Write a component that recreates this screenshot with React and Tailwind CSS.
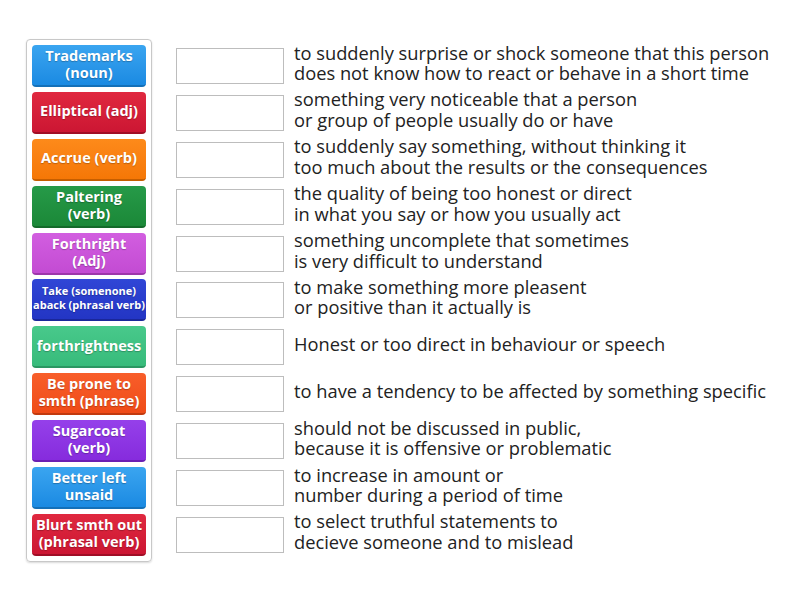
import React from "react";

const tiles = [
  { t: ["Trademarks", "(noun)"], c: "bg-gradient-to-b from-[#3aa5f0] to-[#1a8ae2] border-[#1470b8]" },
  { t: ["Elliptical (adj)"], c: "bg-gradient-to-b from-[#e0283f] to-[#cc1633] border-[#a00e26]" },
  { t: ["Accrue (verb)"], c: "bg-gradient-to-b from-[#fd8a1a] to-[#f57706] border-[#c65e00]" },
  { t: ["Paltering", "(verb)"], c: "bg-gradient-to-b from-[#269a48] to-[#1b8838] border-[#146a2a]" },
  { t: ["Forthright", "(Adj)"], c: "bg-gradient-to-b from-[#d25ee0] to-[#c34bd3] border-[#9d36ab]" },
  { t: ["Take (somenone)", "aback (phrasal verb)"], c: "bg-gradient-to-b from-[#3046d6] to-[#2335c4] border-[#1a279a]", small: true },
  { t: ["forthrightness"], c: "bg-gradient-to-b from-[#48c98b] to-[#37bb7b] border-[#2a9762]" },
  { t: ["Be prone to", "smth (phrase)"], c: "bg-gradient-to-b from-[#f85e2a] to-[#ef4b17] border-[#c23a0e]" },
  { t: ["Sugarcoat", "(verb)"], c: "bg-gradient-to-b from-[#9540ea] to-[#862bdd] border-[#6a1fb3]" },
  { t: ["Better left", "unsaid"], c: "bg-gradient-to-b from-[#3aa5f0] to-[#1a8ae2] border-[#1470b8]" },
  { t: ["Blurt smth out", "(phrasal verb)"], c: "bg-gradient-to-b from-[#e0283f] to-[#cc1633] border-[#a00e26]" },
];

const defs = [
  ["to suddenly surprise or shock someone that this person", "does not know how to react or behave in a short time"],
  ["something very noticeable that a person", "or group of people usually do or have"],
  ["to suddenly say something, without thinking it", "too much about the results or the consequences"],
  ["the quality of being too honest or direct", "in what you say or how you usually act"],
  ["something uncomplete that sometimes", "is very difficult to understand"],
  ["to make something more pleasent", "or positive than it actually is"],
  ["Honest or too direct in behaviour or speech"],
  ["to have a tendency to be affected by something specific"],
  ["should not be discussed in public,", "because it is offensive or problematic"],
  ["to increase in amount or", "number during a period of time"],
  ["to select truthful statements to", "decieve someone and to mislead"],
];

export default function App() {
  return (
    <div className="w-[800px] h-[600px] bg-white flex items-start pt-[39px] pl-[26px]" style={{ fontFamily: '"Open Sans", sans-serif' }}>
      <div className="w-[126px] border border-[#c8c8c8] rounded-[4px] p-[5px] flex flex-col gap-[4.9px] shadow-[0_1px_2px_rgba(0,0,0,0.15)]">
        {tiles.map((tile, i) => (
          <div
            key={i}
            className={`h-[42px] rounded-[4px] border-b-2 pb-[2px] flex flex-col items-center justify-center text-white font-bold text-center ${tile.c} ${tile.small ? "text-[11px] leading-[14px]" : "text-[14.5px] leading-[17px]"}`}
            style={{ textShadow: "0 1px 1px rgba(0,0,0,0.25)" }}
          >
            {tile.t.map((l, j) => (
              <span key={j}>{l}</span>
            ))}
          </div>
        ))}
      </div>
      <div className="ml-[24px] pt-[5px] flex flex-col gap-[4.9px]">
        {defs.map((d, i) => (
          <div key={i} className="h-[42px] flex items-center">
            <div className="w-[108px] h-[36px] mt-[2px] border border-[#bdbdbd] bg-white shrink-0" />
            <div className="ml-[10px] mb-[4px] text-[18.3px] leading-[20.5px] text-[#222] whitespace-nowrap">
              {d.map((l, j) => (
                <div key={j}>{l}</div>
              ))}
            </div>
          </div>
        ))}
      </div>
    </div>
  );
}
